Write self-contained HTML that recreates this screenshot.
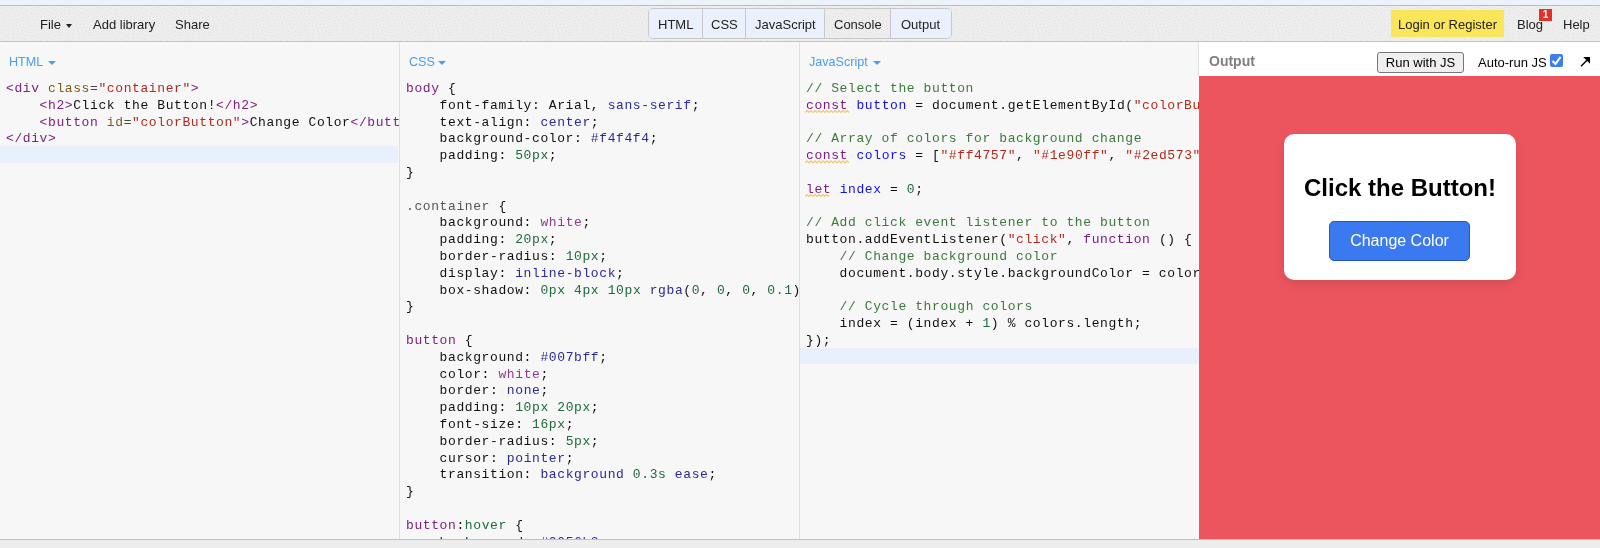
<!DOCTYPE html>
<html><head><meta charset="utf-8"><style>
*{box-sizing:border-box}
html,body{margin:0;padding:0}
body{width:1600px;height:548px;overflow:hidden;position:relative;background:#ececec;font-family:"Liberation Sans",sans-serif}
#topstrip{position:absolute;left:0;top:0;width:1600px;height:5px;background:#ecf1fa}
#toolbar{position:absolute;left:0;top:5px;width:1600px;height:37px;background-color:#ededed;border-top:1px solid #bdbdbd;border-bottom:1px solid #c4c4c4}
.tb{position:absolute;top:1px;height:35px;line-height:35px;font-size:13px;color:#222}
#tabs{position:absolute;left:648px;top:2px;width:304px;height:31px;border:1px solid #c8c8c8;border-radius:5px;overflow:hidden;display:flex}
#tabs div{height:29px;line-height:29px;padding-top:1px;font-size:13px;color:#222;background:#eaf1fc;border-right:1px solid #c8c8c8;text-align:center}
#tabs div:last-child{border-right:none}
#tabs div.off{background:transparent}
#tabs span{display:inline-block}
.panel{position:absolute;top:42px;height:497px;background:#f7f7f7;overflow:hidden}
#outp{overflow:visible}
.phead{position:absolute;left:9px;top:13px;font-size:12.6px;color:#4a9ef0}
.phead .caret{border-left-width:4px;border-right-width:4px;border-top-width:4.5px;margin-left:5px}
.caret{display:inline-block;width:0;height:0;border-left:3.5px solid transparent;border-right:3.5px solid transparent;border-top:4px solid currentColor;vertical-align:middle;margin-left:5px;position:relative;top:0px}
.code{position:absolute;left:6px;top:39px;font-family:"Liberation Mono",monospace;font-size:13px;letter-spacing:0.6px;line-height:16.8px;white-space:pre;color:#111}
.hl{position:absolute;left:0;height:16.8px;background:#e8f0fc}
.t{color:#80207f}.a{color:#7a5a14}.s{color:#b52a1d}.o{color:#444}
.k{color:#7a1a86}.at{color:#2a2a96}.n{color:#1e6a3a}.c{color:#3b7a3b}.d{color:#1010f0}.q{color:#555}.w{color:#8e3a90}
.sq{text-decoration:underline wavy #e6c25a;text-decoration-thickness:1px;text-underline-offset:3px}
#bottom{position:absolute;left:0;top:539px;width:1600px;height:9px;background:#ededed;border-top:1px solid #c0c0c0}
#ohead{position:absolute;left:0;top:0;width:401px;height:34px;background:#fff}
.btnrun{position:absolute;left:178px;top:10px;width:87px;height:21px;border:1px solid #767676;border-radius:3px;background:#efefef;font-size:13px;line-height:19px;text-align:center;color:#000}
#card{position:absolute;left:85px;top:92px;width:232px;height:146px;background:#fff;border-radius:10px;box-shadow:0 4px 10px rgba(0,0,0,0.1);text-align:center}
#card h2{position:absolute;left:0;top:40px;width:100%;margin:0;font-size:24px;font-weight:bold;line-height:28px;color:#000}
#card .b{position:absolute;left:45px;top:87px;width:141px;height:40px;background:#3a79f0;border:1px solid #2756be;border-radius:5px;color:#fff;font-size:16px;line-height:38px}
.code,.tb,#tabs span,.phead,#ohead div,#card h2,#card .b,.btnrun,.tb2{will-change:transform}</style></head><body>
<div id="topstrip"></div>
<div id="toolbar">
  <svg style="position:absolute;left:0;top:0" width="1600" height="35"><defs><pattern id="dots" width="30" height="30" patternUnits="userSpaceOnUse"><rect x="10" y="4" width="1" height="1"/><rect x="12" y="20" width="1" height="1"/><rect x="1" y="2" width="1" height="1"/><rect x="26" y="17" width="1" height="1"/><rect x="3" y="11" width="1" height="1"/><rect x="18" y="1" width="1" height="1"/><rect x="29" y="16" width="1" height="1"/><rect x="6" y="1" width="1" height="1"/><rect x="13" y="2" width="1" height="1"/><rect x="17" y="13" width="1" height="1"/><rect x="1" y="26" width="1" height="1"/><rect x="7" y="20" width="1" height="1"/><rect x="20" y="18" width="1" height="1"/><rect x="1" y="7" width="1" height="1"/><rect x="27" y="4" width="1" height="1"/><rect x="9" y="13" width="1" height="1"/><rect x="4" y="17" width="1" height="1"/><rect x="9" y="17" width="1" height="1"/><rect x="26" y="21" width="1" height="1"/><rect x="20" y="6" width="1" height="1"/><rect x="17" y="22" width="1" height="1"/><rect x="1" y="19" width="1" height="1"/><rect x="13" y="24" width="1" height="1"/><rect x="14" y="11" width="1" height="1"/><rect x="9" y="7" width="1" height="1"/><rect x="22" y="24" width="1" height="1"/><rect x="18" y="9" width="1" height="1"/><rect x="28" y="10" width="1" height="1"/><rect x="23" y="14" width="1" height="1"/><rect x="5" y="24" width="1" height="1"/><rect x="21" y="2" width="1" height="1"/><rect x="18" y="25" width="1" height="1"/><rect x="28" y="26" width="1" height="1"/><rect x="10" y="10" width="1" height="1"/><rect x="22" y="11" width="1" height="1"/><rect x="22" y="21" width="1" height="1"/><rect x="26" y="14" width="1" height="1"/><rect x="12" y="28" width="1" height="1"/><rect x="23" y="7" width="1" height="1"/><rect x="5" y="14" width="1" height="1"/><rect x="12" y="17" width="1" height="1"/><rect x="8" y="28" width="1" height="1"/><rect x="7" y="4" width="1" height="1"/><rect x="4" y="7" width="1" height="1"/><rect x="22" y="27" width="1" height="1"/><rect x="16" y="19" width="1" height="1"/><rect x="14" y="5" width="1" height="1"/><rect x="4" y="20" width="1" height="1"/><rect x="25" y="25" width="1" height="1"/><rect x="25" y="29" width="1" height="1"/><rect x="6" y="10" width="1" height="1"/><rect x="19" y="28" width="1" height="1"/><rect x="3" y="29" width="1" height="1"/><rect x="29" y="23" width="1" height="1"/><rect x="17" y="4" width="1" height="1"/><rect x="16" y="16" width="1" height="1"/><rect x="24" y="3" width="1" height="1"/><rect x="26" y="7" width="1" height="1"/><rect x="2" y="23" width="1" height="1"/><rect x="8" y="24" width="1" height="1"/><rect x="9" y="1" width="1" height="1"/><rect x="15" y="8" width="1" height="1"/><rect x="16" y="28" width="1" height="1"/><rect x="29" y="29" width="1" height="1"/><rect x="13" y="14" width="1" height="1"/><rect x="4" y="4" width="1" height="1"/><rect x="29" y="13" width="1" height="1"/><rect x="20" y="14" width="1" height="1"/><rect x="25" y="11" width="1" height="1"/><rect x="23" y="18" width="1" height="1"/><rect x="2" y="14" width="1" height="1"/></pattern></defs><rect width="1600" height="35" fill="url(#dots)" fill-opacity="0.05"/></svg>
  <div class="tb" style="left:40px">File<span class="caret"></span></div>
  <div class="tb" style="left:93px">Add library</div>
  <div class="tb" style="left:175px">Share</div>
  <div id="tabs">
    <div style="width:54px"><span>HTML</span></div>
    <div style="width:43px"><span>CSS</span></div>
    <div style="width:79px"><span>JavaScript</span></div>
    <div class="off" style="width:66px"><span>Console</span></div>
    <div style="width:60px"><span>Output</span></div>
  </div>
  <div class="tb" style="left:1391px;top:4px;height:27px;line-height:29px;width:113px;background:#fbe55b;text-align:center">Login or Register</div>
  <div class="tb" style="left:1517px">Blog</div>
  <div class="tb2" style="position:absolute;left:1539px;top:3px;width:13px;height:12px;background:#e0302a;color:#fff;font-size:10px;font-weight:bold;line-height:12px;text-align:center">1</div>
  <div class="tb" style="left:1563px">Help</div>
</div>

<div class="panel" style="left:0;width:399px">
  <div class="phead">HTML<span class="caret"></span></div>
  <div class="hl" style="top:104px;width:398px"></div>
  <div class="code"><span class="t">&lt;div</span> <span class="a">class</span><span class="o">=</span><span class="s">"container"</span><span class="t">&gt;</span>
    <span class="t">&lt;h2&gt;</span>Click the Button!<span class="t">&lt;/h2&gt;</span>
    <span class="t">&lt;button</span> <span class="a">id</span><span class="o">=</span><span class="s">"colorButton"</span><span class="t">&gt;</span>Change Color<span class="t">&lt;/button&gt;</span>
<span class="t">&lt;/div&gt;</span></div>
</div>
<div class="panel" style="left:399px;width:400px;border-left:1px solid #e0e0e0">
  <div class="phead">CSS<span class="caret" style="margin-left:3px"></span></div>
  <div class="code"><span class="t">body</span> {
    font-family: Arial, <span class="at">sans-serif</span>;
    text-align: <span class="at">center</span>;
    background-color: <span class="at">#f4f4f4</span>;
    padding: <span class="n">50px</span>;
}

<span class="q">.container</span> {
    background: <span class="w">white</span>;
    padding: <span class="n">20px</span>;
    border-radius: <span class="n">10px</span>;
    display: <span class="at">inline-block</span>;
    box-shadow: <span class="n">0px</span> <span class="n">4px</span> <span class="n">10px</span> <span class="at">rgba</span>(<span class="n">0</span>, <span class="n">0</span>, <span class="n">0</span>, <span class="n">0.1</span>);
}

<span class="t">button</span> {
    background: <span class="at">#007bff</span>;
    color: <span class="w">white</span>;
    border: <span class="at">none</span>;
    padding: <span class="n">10px</span> <span class="n">20px</span>;
    font-size: <span class="n">16px</span>;
    border-radius: <span class="n">5px</span>;
    cursor: <span class="at">pointer</span>;
    transition: <span class="at">background</span> <span class="n">0.3s</span> <span class="at">ease</span>;
}

<span class="t">button</span>:<span class="n">hover</span> {
    background: <span class="at">#0056b3</span>;
}</div>
</div>
<div class="panel" style="left:799px;width:400px;border-left:1px solid #e0e0e0">
  <div class="phead">JavaScript<span class="caret"></span></div>
  <svg style="position:absolute;left:5px;top:68px" width="60" height="90"><path d="M0 2.5 L2 0.5 L4 2.5 L6 0.5 L8 2.5 L10 0.5 L12 2.5 L14 0.5 L16 2.5 L18 0.5 L20 2.5 L22 0.5 L24 2.5 L26 0.5 L28 2.5 L30 0.5 L32 2.5 L34 0.5 L36 2.5 L38 0.5 L40 2.5 L42 0.5 L44 2.5 M0 52.9 L2 50.9 L4 52.9 L6 50.9 L8 52.9 L10 50.9 L12 52.9 L14 50.9 L16 52.9 L18 50.9 L20 52.9 L22 50.9 L24 52.9 L26 50.9 L28 52.9 L30 50.9 L32 52.9 L34 50.9 L36 52.9 L38 50.9 L40 52.9 L42 50.9 L44 52.9 M0 86.5 L2 84.5 L4 86.5 L6 84.5 L8 86.5 L10 84.5 L12 86.5 L14 84.5 L16 86.5 L18 84.5 L20 86.5 L22 84.5 L24 86.5" stroke="#eccb6a" stroke-width="1.1" fill="none"/></svg>
  <div class="hl" style="top:305.6px;width:399px"></div>
  <div class="code"><span class="c">// Select the button</span>
<span class="k">const</span> <span class="d">button</span> = document.getElementById(<span class="s">"colorButton"</span>);

<span class="c">// Array of colors for background change</span>
<span class="k">const</span> <span class="d">colors</span> = [<span class="s">"#ff4757"</span>, <span class="s">"#1e90ff"</span>, <span class="s">"#2ed573"</span>, <span class="s">"#ffa502"</span>];

<span class="k">let</span> <span class="d">index</span> = <span class="n">0</span>;

<span class="c">// Add click event listener to the button</span>
button.addEventListener(<span class="s">"click"</span>, <span class="k">function</span> () {
    <span class="c">// Change background color</span>
    document.body.style.backgroundColor = colors[index];

    <span class="c">// Cycle through colors</span>
    index = (index + <span class="n">1</span>) % colors.length;
});</div>
</div>
<div class="panel" id="outp" style="left:1199px;width:401px;background:#ec555e">
  <div id="ohead"><div style="position:absolute;left:-1px;top:0;width:1px;height:34px;background:#e0e0e0"></div>
    <div style="position:absolute;left:10px;top:11px;font-size:14px;font-weight:bold;color:#808080">Output</div>
    <div class="btnrun">Run with JS</div>
    <div style="position:absolute;left:279px;top:13px;font-size:13px;color:#000">Auto-run JS</div>
    <div style="position:absolute;left:351px;top:12px;width:13px;height:13px;background:#3a7ff0;border-radius:2px"><svg width="13" height="13" viewBox="0 0 13 13" style="position:absolute;left:0;top:0"><path d="M2.4 6.9 L5.5 9.8 L10.6 2.8" stroke="#fff" stroke-width="2.1" fill="none"/></svg></div>
    <svg style="position:absolute;left:380px;top:14px" width="12" height="12" viewBox="0 0 12 12"><path d="M4.2 1 H11 V7.8 Z" fill="#000"/><path d="M2 10.2 L8.5 3.7" stroke="#000" stroke-width="1.5" fill="none"/></svg>
  </div>
  <div id="card">
    <h2>Click the Button!</h2>
    <div class="b">Change Color</div>
  </div>
</div>
<div id="bottom"></div>
</body></html>
